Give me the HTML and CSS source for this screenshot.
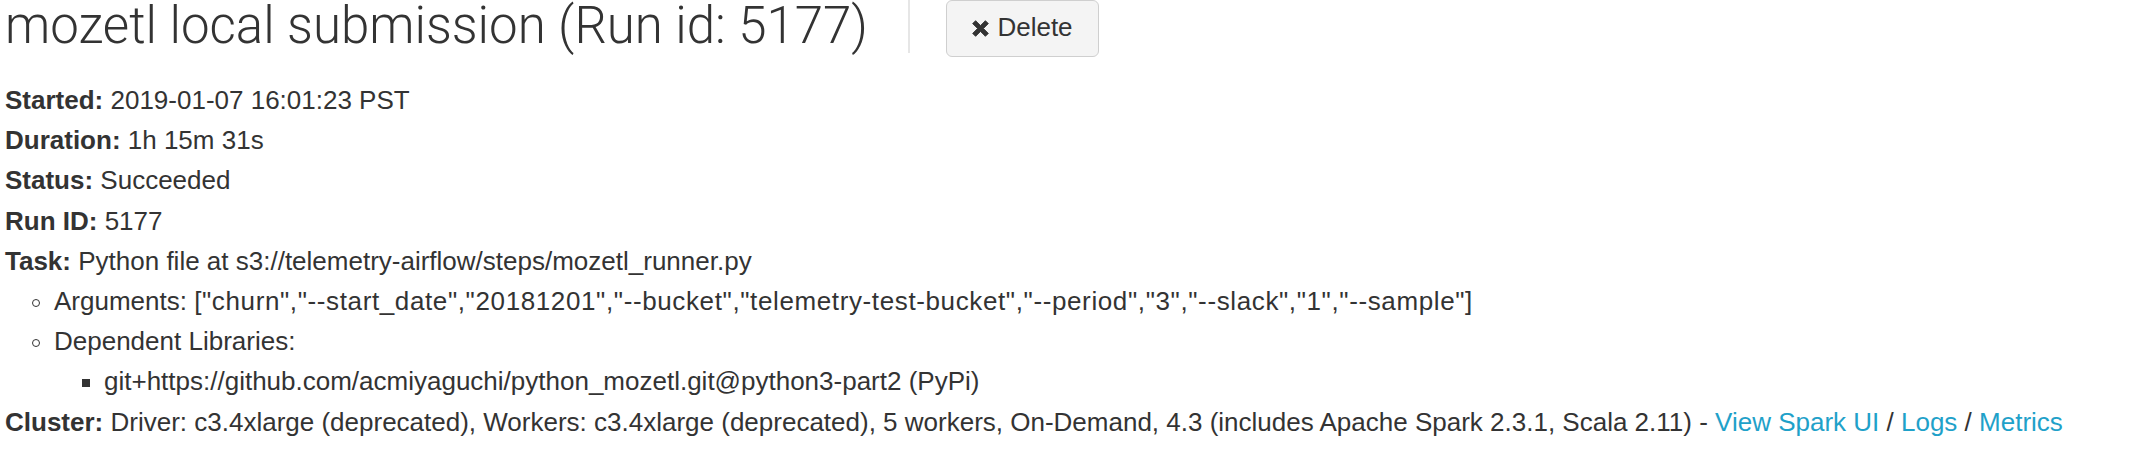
FILE: index.html
```html
<!DOCTYPE html>
<html>
<head>
<meta charset="utf-8">
<link rel="stylesheet" href="styles.css">
</head>
<body>
<div class="page">
  <div class="header">
    <h1 class="title">mozetl local submission (Run id: 5177)</h1>
    <span class="sep"></span>
    <button class="btn" type="button">
      <svg class="icon" viewBox="0 0 16 16" width="17" height="17"><path d="M0.6 3.4 3.4 0.6 8 5.2 12.6 0.6 15.4 3.4 10.8 8 15.4 12.6 12.6 15.4 8 10.8 3.4 15.4 0.6 12.6 5.2 8Z" fill="#333" stroke="#333" stroke-width="0.8" stroke-linejoin="round"/></svg>
      <span>Delete</span>
    </button>
  </div>
  <div class="details">
    <div class="row"><b>Started:</b> 2019-01-07 16:01:23 PST</div>
    <div class="row"><b>Duration:</b> 1h 15m 31s</div>
    <div class="row"><b>Status:</b> Succeeded</div>
    <div class="row"><b>Run ID:</b> 5177</div>
    <div class="row"><b>Task:</b> Python file at s3://telemetry-airflow/steps/mozetl_runner.py
      <ul class="sub">
        <li class="circ">Arguments: <span class="args">["churn","--start_date","20181201","--bucket","telemetry-test-bucket","--period","3","--slack","1","--sample"]</span></li>
        <li class="circ">Dependent Libraries:
          <ul class="subsub">
            <li class="sq">git+https://github.com/acmiyaguchi/python_mozetl.git@python3-part2 (PyPi)</li>
          </ul>
        </li>
      </ul>
    </div>
    <div class="row"><b>Cluster:</b> Driver: c3.4xlarge (deprecated), Workers: c3.4xlarge (deprecated), 5 workers, On-Demand, 4.3 (includes Apache Spark 2.3.1, Scala 2.11) - <a href="#" class="link">View Spark UI</a> / <a href="#" class="link">Logs</a> / <a href="#" class="link">Metrics</a></div>
  </div>
</div>
</body>
</html>
```

FILE: styles.css
```css
html, body {
  margin: 0;
  padding: 0;
  background: #fff;
}
.page {
  padding: 0 0 0 5px;
  color: #333;
  font-family: "Liberation Sans", Arial, sans-serif;
}
.header {
  display: flex;
  align-items: flex-start;
  height: 58px;
}
.title {
  margin: 0;
  font-family: Roboto, "Liberation Sans", sans-serif;
  font-weight: 300;
  font-size: 51px;
  line-height: 52px;
  color: #333;
  white-space: nowrap;
}
.sep {
  width: 2px;
  height: 53px;
  background: #e6e6e6;
  margin-left: 40px;
}
.btn {
  margin-left: 36px;
  width: 153px;
  height: 57px;
  display: flex;
  align-items: center;
  justify-content: center;
  gap: 8px;
  background: #f4f4f4;
  border: 1px solid #cfcfcf;
  border-radius: 6px;
  font-family: "Liberation Sans", Arial, sans-serif;
  font-size: 26px;
  color: #333;
  padding: 0 0 2px 0;
}
.icon {
  display: block;
  margin-top: 2px;
}
.details {
  padding-top: 22px;
  font-size: 26px;
  line-height: 40.2px;
}
.row b {
  font-weight: bold;
}
.args {
  letter-spacing: 0.62px;
}
.sub, .subsub {
  list-style: none;
  margin: 0;
}
.sub {
  padding-left: 27px;
}
.subsub {
  padding-left: 50px;
}
.circ::before {
  content: "";
  display: inline-block;
  width: 6px;
  height: 6px;
  border: 1px solid #333;
  border-radius: 50%;
  margin-right: 14px;
  vertical-align: 3px;
}
.sq::before {
  content: "";
  display: inline-block;
  width: 8px;
  height: 8px;
  background: #333;
  margin-right: 14px;
  vertical-align: 3px;
}
.link {
  color: #1fa1c9;
  text-decoration: none;
}
```
